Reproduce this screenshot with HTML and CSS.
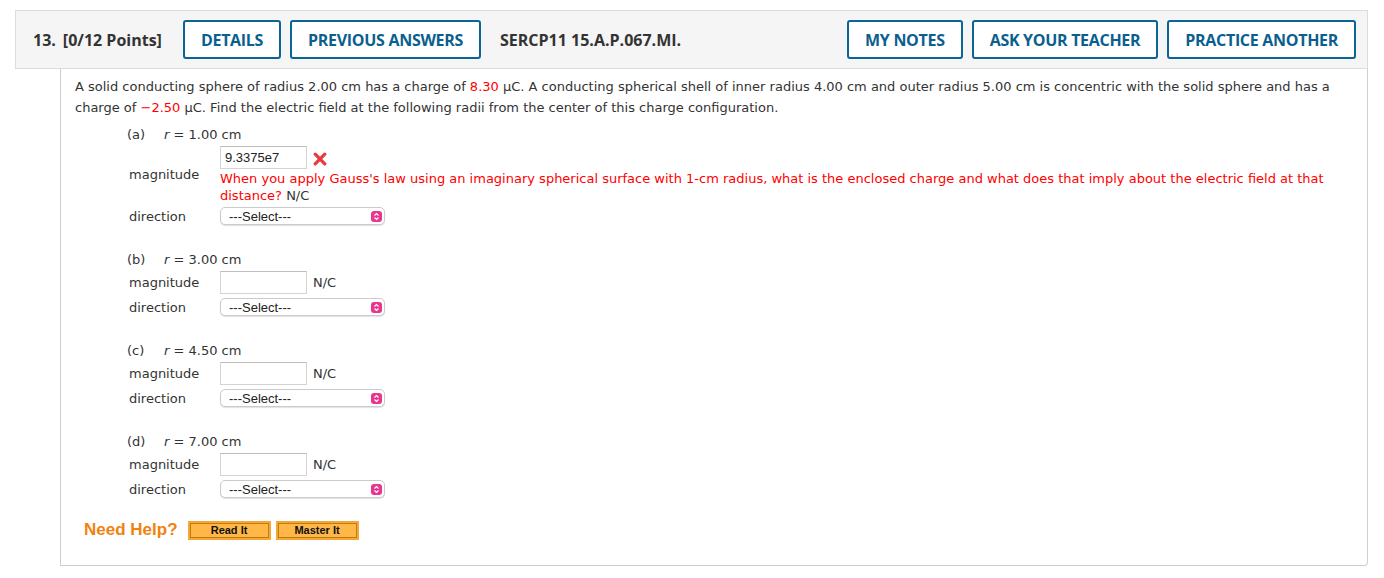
FILE: index.html
```html
<!DOCTYPE html>
<html>
<head>
<meta charset="utf-8">
<link rel="stylesheet" href="styles.css">
</head>
<body>
<div class="qhead">
  <span class="qnum">13.</span>
  <span class="qpts">[0/12 Points]</span>
  <button class="hbtn">DETAILS</button>
  <button class="hbtn">PREVIOUS ANSWERS</button>
  <span class="qcode">SERCP11 15.A.P.067.MI.</span>
  <span class="spacer"></span>
  <button class="hbtn">MY NOTES</button>
  <button class="hbtn">ASK YOUR TEACHER</button>
  <button class="hbtn">PRACTICE ANOTHER</button>
</div>
<div class="qbody">
  <p class="stem">A solid conducting sphere of radius 2.00 cm has a charge of <span class="red">8.30</span> μC. A conducting spherical shell of inner radius 4.00 cm and outer radius 5.00 cm is concentric with the solid sphere and has a charge of <span class="red">−2.50</span> μC. Find the electric field at the following radii from the center of this charge configuration.</p>

  <div class="part">
    <div class="phead"><span class="plabel">(a)</span><span><i>r</i> = 1.00 cm</span></div>
    <div class="prow mag">
      <span class="lbl">magnitude</span>
      <div class="val">
        <div class="inrow"><span class="inp">9.3375e7</span>
          <svg class="xmark" width="14" height="14" viewBox="0 0 14 14"><path d="M2.2 2.2 L11.8 11.8 M11.8 2.2 L2.2 11.8" stroke="#e8383d" stroke-width="3.2" stroke-linecap="round"/></svg>
        </div>
        <div class="fb"><span class="red">When you apply Gauss's law using an imaginary spherical surface with 1-cm radius, what is the enclosed charge and what does that imply about the electric field at that distance?</span> N/C</div>
      </div>
    </div>
    <div class="prow dir">
      <span class="lbl">direction</span>
      <div class="val"><div class="sel"><span>---Select---</span><svg class="stp" width="11" height="11" viewBox="0 0 11 11"><rect width="11" height="11" rx="3" fill="#e8358f"/><path d="M3.5 4.5 L5.5 2.6 L7.5 4.5 M3.5 6.5 L5.5 8.4 L7.5 6.5" stroke="#fff" stroke-width="1.2" fill="none"/></svg></div></div>
    </div>
  </div>

  <div class="part">
    <div class="phead"><span class="plabel">(b)</span><span><i>r</i> = 3.00 cm</span></div>
    <div class="prow mag">
      <span class="lbl">magnitude</span>
      <div class="val inrow"><span class="inp"></span><span class="unit">N/C</span></div>
    </div>
    <div class="prow dir">
      <span class="lbl">direction</span>
      <div class="val"><div class="sel"><span>---Select---</span><svg class="stp" width="11" height="11" viewBox="0 0 11 11"><rect width="11" height="11" rx="3" fill="#e8358f"/><path d="M3.5 4.5 L5.5 2.6 L7.5 4.5 M3.5 6.5 L5.5 8.4 L7.5 6.5" stroke="#fff" stroke-width="1.2" fill="none"/></svg></div></div>
    </div>
  </div>

  <div class="part">
    <div class="phead"><span class="plabel">(c)</span><span><i>r</i> = 4.50 cm</span></div>
    <div class="prow mag">
      <span class="lbl">magnitude</span>
      <div class="val inrow"><span class="inp"></span><span class="unit">N/C</span></div>
    </div>
    <div class="prow dir">
      <span class="lbl">direction</span>
      <div class="val"><div class="sel"><span>---Select---</span><svg class="stp" width="11" height="11" viewBox="0 0 11 11"><rect width="11" height="11" rx="3" fill="#e8358f"/><path d="M3.5 4.5 L5.5 2.6 L7.5 4.5 M3.5 6.5 L5.5 8.4 L7.5 6.5" stroke="#fff" stroke-width="1.2" fill="none"/></svg></div></div>
    </div>
  </div>

  <div class="part">
    <div class="phead"><span class="plabel">(d)</span><span><i>r</i> = 7.00 cm</span></div>
    <div class="prow mag">
      <span class="lbl">magnitude</span>
      <div class="val inrow"><span class="inp"></span><span class="unit">N/C</span></div>
    </div>
    <div class="prow dir">
      <span class="lbl">direction</span>
      <div class="val"><div class="sel"><span>---Select---</span><svg class="stp" width="11" height="11" viewBox="0 0 11 11"><rect width="11" height="11" rx="3" fill="#e8358f"/><path d="M3.5 4.5 L5.5 2.6 L7.5 4.5 M3.5 6.5 L5.5 8.4 L7.5 6.5" stroke="#fff" stroke-width="1.2" fill="none"/></svg></div></div>
    </div>
  </div>

  <div class="help">
    <span class="needhelp">Need Help?</span>
    <button class="hlp">Read It</button>
    <button class="hlp">Master It</button>
  </div>
</div>
</body>
</html>
```
FILE: styles.css
```css
html, body { margin: 0; padding: 0; background: #fff; }
body { font-family: "DejaVu Sans", Verdana, sans-serif; color: #333; }

.qhead {
  display: flex;
  align-items: center;
  margin: 10px 16px 0 15px;
  height: 59px;
  box-sizing: border-box;
  padding: 0 11px 0 17px;
  background: #f5f5f5;
  border: 1px solid #dcdcdc;
  font-family: "Open Sans", sans-serif;
  font-weight: 700;
  font-size: 16px;
  color: #333;
}
.qnum { margin-right: 7px; }
.qpts { margin-right: 21px; }
.qcode { margin-left: 10px; }
.spacer { flex: 1; }
.hbtn {
  height: 39px;
  box-sizing: border-box;
  padding: 0 16px;
  margin-right: 9px;
  border: 2px solid #0b6496;
  border-radius: 3px;
  background: #fff;
  color: #0b5f8f;
  font-family: "Open Sans", sans-serif;
  font-weight: 700;
  font-size: 16px;
  letter-spacing: -0.3px;
}
.hbtn:last-child { margin-right: 0; }

.qbody {
  margin: 0 16px 0 60px;
  height: 497px;
  box-sizing: border-box;
  border: 1px solid #cfcfcf;
  border-top: none;
  border-bottom-right-radius: 4px;
  padding: 7px 14px 0 14px;
  font-size: 13px;
}
.stem { margin: 0; line-height: 21px; }
.red { color: #f00; }

.part { margin: 5px 0 21px 52px; }
.phead { display: flex; height: 22px; align-items: center; }
.plabel { width: 37px; }
.prow {
  display: grid;
  grid-template-columns: 91px 1fr;
  align-items: center;
  margin-left: 2px;
}
.prow.mag { margin-top: 1px; }
.prow.dir { margin-top: 3px; }
.prow .lbl { line-height: 21px; }
.inrow { display: flex; align-items: center; }
.inp {
  display: block;
  width: 87px;
  height: 23px;
  box-sizing: border-box;
  border: 1px solid #d4d4d4;
  border-top-color: #bdbdbd;
  padding: 2px 4px;
  font-family: "Liberation Sans", Arial, sans-serif;
  font-size: 13px;
  color: #222;
  line-height: 17px;
}
.xmark { margin-left: 6px; margin-top: 3px; }
.unit { margin-left: 6px; }
.fb { line-height: 17px; margin-top: 1px; margin-bottom: -1px; }
.sel {
  display: flex;
  align-items: center;
  justify-content: space-between;
  width: 165px;
  height: 18px;
  box-sizing: border-box;
  border: 1px solid #cbcbcb;
  border-radius: 5px;
  box-shadow: 0 1px 1px rgba(0,0,0,0.12);
  padding: 0 2px 0 8px;
  font-family: "Liberation Sans", Arial, sans-serif;
  font-size: 13px;
  color: #222;
  background: #fff;
  margin: 1px 0 2px;
}

.help {
  display: flex;
  align-items: center;
  margin: -1px 0 0 9px;
}
.needhelp {
  font-family: "Liberation Sans", Arial, sans-serif;
  font-weight: 700;
  font-size: 17px;
  color: #f0830f;
  margin-right: 10px;
}
.hlp {
  width: 83px;
  height: 19px;
  box-sizing: border-box;
  margin-right: 5px;
  padding: 0;
  background: #ffb847;
  border: 2px solid #f4a637;
  outline: 1px solid #c47a12;
  outline-offset: -3px;
  font-family: "Liberation Sans", Arial, sans-serif;
  font-weight: 700;
  font-size: 11px;
  color: #111;
}
```
